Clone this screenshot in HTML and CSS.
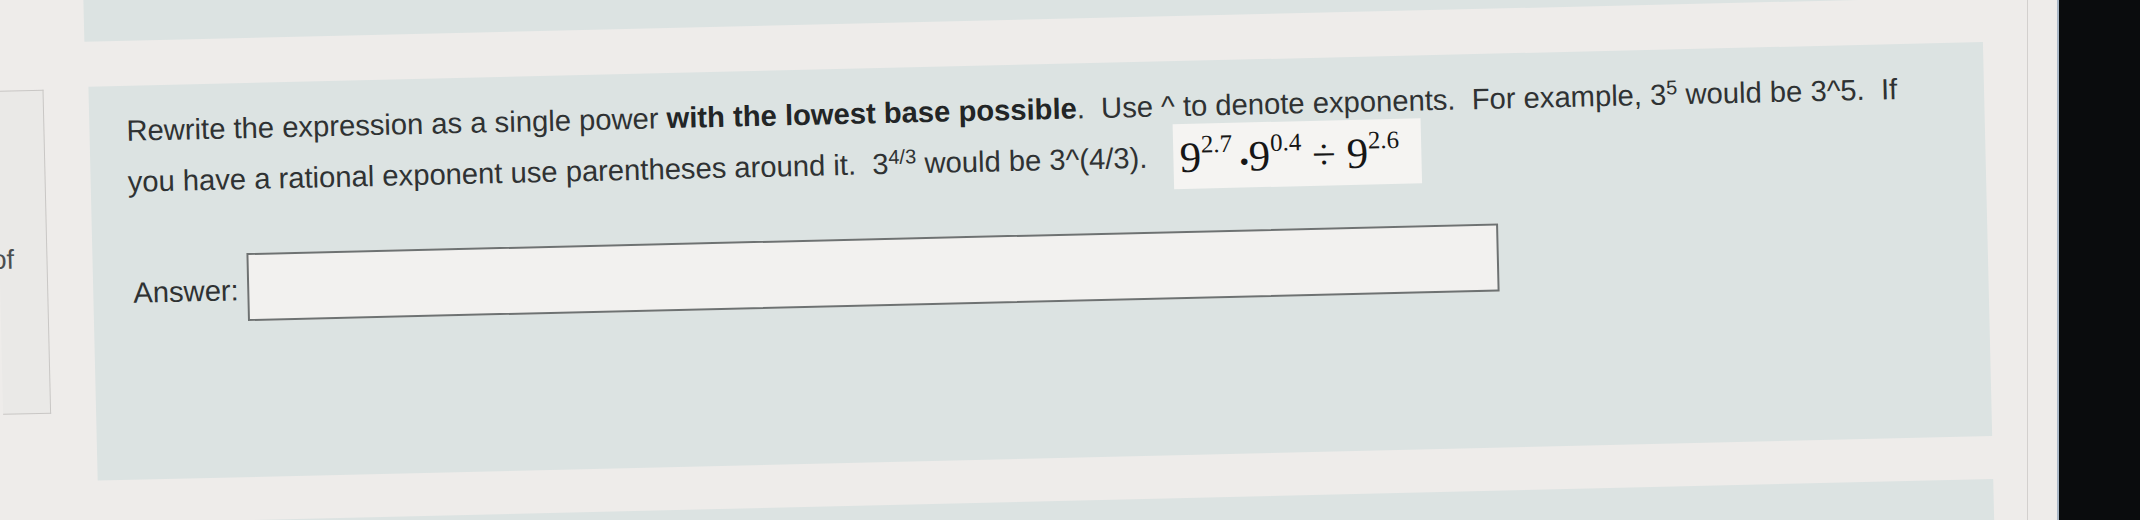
FILE: index.html
```html
<!DOCTYPE html>
<html lang="en">
<head>
<meta charset="utf-8">
<title>Question</title>
<link rel="stylesheet" href="styles.css">
</head>
<body>
<div class="frame">
  <div class="screen">
    <div class="viewport">
      <div class="page">
        <div class="card card-top"></div>
        <div class="row">
          <aside class="side"><span class="side-text">of</span></aside>
          <section class="card question">
            <p class="prompt">Rewrite the expression as a single power <b>with the lowest base possible</b>.&nbsp; Use ^ to denote exponents.&nbsp; For example, 3<sup>5</sup> would be 3^5.&nbsp; If you have a rational exponent use parentheses around it.&nbsp; 3<sup>4/3</sup> would be 3^(4/3).&nbsp; <span class="math">9<sup>2.7</sup><span class="dot">•</span>9<sup>0.4</sup> ÷ 9<sup>2.6</sup></span></p>
            <div class="answer">
              <label class="answer-label" for="ans">Answer:</label>
              <div class="input" id="ans"></div>
            </div>
          </section>
        </div>
        <div class="card card-next"></div>
      </div>
    </div>
    <div class="rule"></div>
    <div class="strip"></div>
  </div>
  <div class="bezel"></div>
</div>
</body>
</html>
```

FILE: styles.css
```css
html, body {
  margin: 0;
  padding: 0;
  background: #0a0c0d;
}

.frame {
  display: flex;
  width: 2140px;
  height: 520px;
  overflow: hidden;
}

.screen {
  display: flex;
  flex: none;
  width: 2057px;
  height: 520px;
  background: #eeecea;
}

.viewport {
  flex: none;
  width: 2027px;
  height: 520px;
  overflow: hidden;
}

.page {
  margin-top: -40px;
  transform: rotate(-1.35deg);
  transform-origin: 1013px 310px;
  font-family: "Liberation Sans", Arial, sans-serif;
  color: #2f3233;
}

.card {
  background: #dce3e2;
}

.card-top {
  height: 60px;
  width: 1898px;
  margin-left: 90px;
}

.row {
  display: flex;
  align-items: flex-start;
  margin-top: 45px;
}

.side {
  flex: none;
  width: 47px;
  height: 322px;
  margin-top: 2px;
  border: 1px solid #c9c7c5;
  border-left: none;
  background: #eae9e7;
  overflow: hidden;
}

.side-text {
  display: block;
  margin-top: 153px;
  margin-left: -8px;
  font-size: 27px;
  line-height: 30px;
  color: #4c4f50;
}

.question {
  flex: none;
  box-sizing: border-box;
  width: 1895px;
  height: 394px;
  margin-left: 45px;
  padding: 20px 58px 0 37px;
}

.prompt {
  margin: 0;
  font-size: 29.2px;
  line-height: 51px;
}

.prompt b {
  font-weight: 700;
  color: #222526;
}

.prompt sup {
  font-size: 20px;
  line-height: 0;
  vertical-align: 10px;
}

.math {
  margin-left: 10px;
  font-family: "Liberation Serif", "Times New Roman", serif;
  font-size: 43px;
  line-height: 1;
  color: #161616;
  background: #f5f4f2;
  padding: 10px 22px 8px 6px;
  vertical-align: -5px;
}

.math sup {
  font-size: 25px;
  line-height: 0;
  vertical-align: 19px;
}

.dot {
  font-size: 27px;
  margin-left: 7px;
}

.answer {
  display: flex;
  align-items: flex-start;
  margin-top: 48px;
}

.answer-label {
  font-size: 29.2px;
  line-height: 34px;
  margin: 20px 9px 0 3px;
}

.input {
  flex: none;
  box-sizing: border-box;
  width: 1252px;
  height: 68px;
  border: 2px solid #6e7272;
  background: #f2f1ef;
}

.card-next {
  width: 1895px;
  height: 80px;
  margin-top: 43px;
  margin-left: 93px;
}

.rule {
  flex: none;
  width: 1px;
  background: #d3d0ce;
}

.strip {
  flex: 1;
}

.bezel {
  flex: 1;
  background: #0a0c0d;
  border-left: 2px solid #a9b7c6;
}
```
